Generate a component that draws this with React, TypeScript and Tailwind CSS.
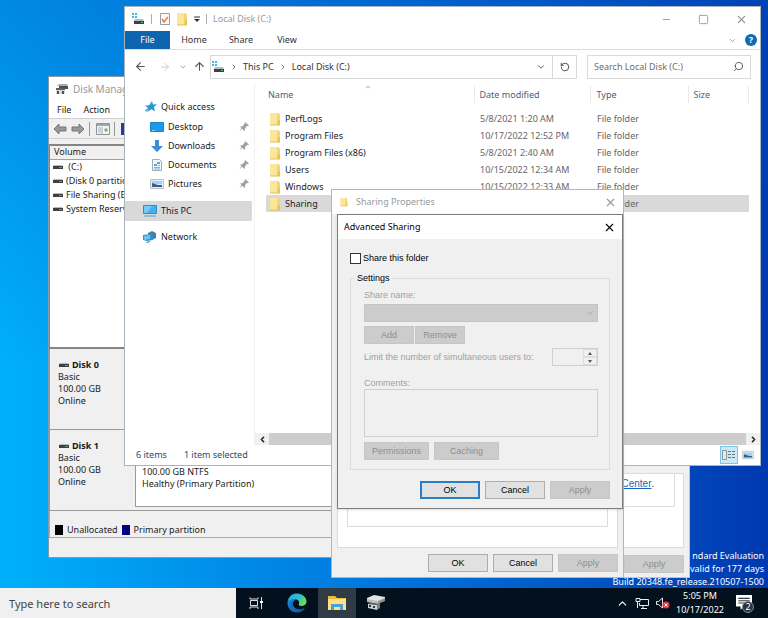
import type { ReactNode } from "react";
import clsx from "clsx";
import { ArrowLeft, ArrowRight, ArrowUp, ChevronDown, ChevronLeft, ChevronRight, ChevronUp, Minus, RotateCw, Search, Square, X } from "lucide-react";

const FILES = [
  { name: "PerfLogs", modified: "5/8/2021 1:20 AM" },
  { name: "Program Files", modified: "10/17/2022 12:52 PM" },
  { name: "Program Files (x86)", modified: "5/8/2021 2:40 AM" },
  { name: "Users", modified: "10/15/2022 12:34 AM" },
  { name: "Windows", modified: "10/15/2022 12:33 AM" },
  { name: "Sharing", modified: "", selected: true },
];

const VOLUMES = [" (C:)", "(Disk 0 partition 2)", "File Sharing (E:)", "System Reserved"];

const DISKS = [
  { name: "Disk 0", partition: null },
  { name: "Disk 1", partition: "100.00 GB NTFS" },
];

/* Icons */

function FolderIcon({ className = "w-3 h-3.5" }: { className?: string }) {
  return (
    <svg viewBox="0 0 12 14" className={clsx("shrink-0", className)}>
      <path d="M1 1h8l2 1.500V13H1z" fill="#f5d676" />
      <path d="M1 1h7v12H1z" fill="#fce69a" />
      <path d="M9 8h2v5H8z" fill="#eec452" />
      <path d="M1 13h10" stroke="#e5bf55" />
    </svg>
  );
}

function DriveIcon({ className = "w-3.5 h-3" }: { className?: string }) {
  return (
    <svg viewBox="0 0 14 12" className={clsx("shrink-0", className)}>
      <path d="M1 0h2v2H1zM4 0h2v2H4zM1 3h2v2H1zM4 3h2v2H4z" fill="#35bfe3" />
      <path d="M4 6h8l1 2H3z" fill="#b8bcbc" />
      <path d="M3 8h10v3H3z" fill="#3a4140" />
      <path d="M10 9h2v1h-2z" fill="#39c46a" />
    </svg>
  );
}

function VolumeIcon() {
  return (
    <svg viewBox="0 0 12 6" className="w-3 h-1.5 shrink-0">
      <path d="M2 1h8l1 1H1z" fill="#b5b9b8" />
      <path d="M1 2h10v3H1z" fill="#3b4140" />
      <path d="M7 3h3v1H7z" fill="#4aa877" />
    </svg>
  );
}

function DiskToolIcon() {
  return (
    <svg viewBox="0 0 14 12" className="w-3.5 h-3 shrink-0">
      <path d="M4 1h9l-1 2H2z" fill="#a9acac" />
      <path d="M4 3h9v3H4z" fill="#4a4e4e" />
      <path d="M1 5h9v6H1z" fill="#dadcdc" />
      <path d="M1 5h9v2H1z" fill="#5c6060" />
      <path d="M2 8h2v3H2zM7 8h2v3H7z" fill="#4d5050" />
    </svg>
  );
}

function StarIcon() {
  return (
    <svg viewBox="0 0 12 12" className="w-3 h-3 shrink-0">
      <path d="M7 0l1 3.500 4-.2-3 2.700 1 4.500-3.500-2.300L2 11l1.200-4L0 4.800l4.300-.5z" fill="#2b95d8" />
      <path d="M0 9l3-2 1 1-3 3z" fill="#63b5e6" />
    </svg>
  );
}

function DesktopIcon() {
  return (
    <svg viewBox="0 0 14 12" className="w-3.5 h-3 shrink-0">
      <path d="M.5 1.500h13v9H.5z" fill="#1a9bee" stroke="#1583cc" />
      <path d="M2 9h3v1H2z" fill="#8cd2ff" />
    </svg>
  );
}

function DownloadsIcon() {
  return (
    <svg viewBox="0 0 14 12" className="w-3.5 h-3 shrink-0">
      <path d="M5 0h4v6h4l-6 6-6-6h4z" fill="#3d8ad6" />
    </svg>
  );
}

function DocumentsIcon() {
  return (
    <svg viewBox="0 0 14 12" className="w-3.5 h-3 shrink-0">
      <path d="M2.500.5h7l2 2v9h-9z" fill="#f4f8fb" stroke="#9fadb8" />
      <path d="M7 3h3v2H7zM4 5h3v2H4z" fill="#58a5d8" />
      <path d="M4 8.500h6M4 10h6M8 6.500h2" stroke="#7fb3d4" />
    </svg>
  );
}

function PicturesIcon({ className = "w-3.5 h-3" }: { className?: string }) {
  return (
    <svg viewBox="0 0 14 12" className={clsx("shrink-0", className)}>
      <path d="M.5 1.500h13v9H.5z" fill="#dbeefc" stroke="#b8c2ca" />
      <path d="M2 3h10v3H2z" fill="#a3d1f3" />
      <path d="M2 9V5l3 1 3 1h4v2z" fill="#3c5d80" />
    </svg>
  );
}

function ThisPcIcon() {
  return (
    <svg viewBox="0 0 14 12" className="w-3.5 h-3 shrink-0">
      <path d="M.5.5h13v8H.5z" fill="#41b1f0" stroke="#2b8fce" />
      <path d="M1 1h8L4 8H1z" fill="#74caf8" />
      <path d="M1 11h12" stroke="#4f9fd0" />
    </svg>
  );
}

function NetworkIcon() {
  return (
    <svg viewBox="0 0 14 12" className="w-3.5 h-3 shrink-0">
      <path d="M5 2l4-2 4 2v5l-4 2-4-2z" fill="#4a7f9f" />
      <path d="M0 4l8-1 2 2v4l-6 1-4-1z" fill="#2d94cf" />
      <path d="M1 5l6-1v4L1 9z" fill="#6cc3ef" />
      <path d="M3 11l4-1v1l-3 1z" fill="#4f7e9c" />
    </svg>
  );
}

function PinIcon() {
  return (
    <svg viewBox="0 0 10 10" className="w-2.5 h-2.5 shrink-0">
      <path d="M6 0l4 3.500-1 .6-1.500.2L6 6.500 5.800 9 4.500 8 3 6.800.3 9.700 2.400 6 1 4.500l2.400-.3L5.500 2z" fill="#9aa0a5" />
    </svg>
  );
}

function EdgeIcon() {
  return (
    <svg viewBox="0 0 20 20" className="w-5 h-5">
      <defs>
        <linearGradient id="edge-top" x1="0" x2="1" y1="0" y2=".5">
          <stop offset="0" stopColor="#2aa7e6" />
          <stop offset=".6" stopColor="#2fc0cf" />
          <stop offset="1" stopColor="#6bdc58" />
        </linearGradient>
        <linearGradient id="edge-body" x1="0" x2="1" y1="0" y2="1">
          <stop offset="0" stopColor="#1b8ee0" />
          <stop offset="1" stopColor="#0d4f9f" />
        </linearGradient>
      </defs>
      <path d="M.5 9C1.500 3 5.500.5 10 .5c5.500 0 9.500 4 9.500 8 0 3-2.500 4.500-5 4.500-2 0-3.500-.7-2.500-2 .6-3-1-4.500-3.500-4.500C4 6.500 1 7.500.5 9z" fill="url(#edge-top)" />
      <path d="M.5 9C2 6.500 5 6 8.500 6.500 6 8 5.500 10 6 12c.8 3.500 5 5 9 4 1-.3 2-.8 2.500-.6.5.3-2.500 4.100-7.500 4.100C4 19.500 0 14.500.5 9z" fill="url(#edge-body)" />
      <path d="M8.500 6.500C5 9 5 14 9.500 18.500 5 18 3 15 3.200 11.500 3.400 9 5.500 7 8.500 6.500z" fill="#1569bd" />
    </svg>
  );
}

function ExplorerTaskIcon() {
  return (
    <svg viewBox="0 0 20 16" className="w-5 h-4">
      <path d="M1 1h7l2 2h9v12H1z" fill="#f1b93a" />
      <path d="M1 4h18v11H1z" fill="#fde08a" />
      <path d="M4 9h12v6H4z" fill="#4b9fd4" />
      <path d="M7 12h6v3H7z" fill="#fde08a" />
    </svg>
  );
}

function DiskTaskIcon() {
  return (
    <svg viewBox="0 0 20 18" className="w-5 h-4.5">
      <path d="M1 4l7-3 11 2v3l-7 3L1 6z" fill="#dfe3e3" />
      <path d="M1 5l11 2v3L1 8z" fill="#b9bebe" />
      <path d="M12 7l7-3v3l-7 3z" fill="#8e9494" />
      <path d="M2 9l9 1v6l-9-2z" fill="#cfd3d3" />
      <path d="M11 10l3-1v5l-3 2z" fill="#7b8181" />
      <path d="M3 11h2v2H3zM7 12h2v2H7z" fill="#303737" />
      <path d="M2 9l9 1v1L2 10z" fill="#3f4646" />
    </svg>
  );
}

/* Shared dialog parts */

function DialogButton({ children, disabled, primary, className = "w-[60px]" }: { children: ReactNode; disabled?: boolean; primary?: boolean; className?: string }) {
  return (
    <button
      disabled={disabled}
      className={clsx(
        "flex h-[18px] items-center justify-center border",
        className,
        disabled && "border-[#c6c6c6] bg-[#cccccc] text-[#8e8e8e]",
        !disabled && "bg-[#e1e1e1] text-black",
        !disabled && (primary ? "border-2 border-[#2a7fc4]" : "border-[#adadad]"),
      )}
    >
      {children}
    </button>
  );
}

function DialogActions({ primary }: { primary?: boolean }) {
  return (
    <div className="flex justify-end gap-[5px]">
      <DialogButton primary={primary}>OK</DialogButton>
      <DialogButton>Cancel</DialogButton>
      <DialogButton disabled>Apply</DialogButton>
    </div>
  );
}

/* Windows */

function DiskManagement() {
  return (
    <section className="absolute left-[48px] top-[76px] flex h-[482px] w-[642px] flex-col border border-[#8a9aa5] bg-[#f0f0f0] text-[9px] leading-3 text-[#1a1a1a]">
      <div className="flex h-6 items-center gap-1 bg-white px-1.5 text-[10px] text-[#999]">
        <DiskToolIcon />
        Disk Management
      </div>
      <nav className="flex h-[17px] items-center gap-3 bg-white px-2">
        <span>File</span>
        <span>Action</span>
      </nav>
      <div className="flex h-[21px] items-center gap-1 border-y border-[#d0d0d0] px-1">
        <svg viewBox="0 0 14 12" className="w-3.5 h-3">
          <path d="M6 1v3h7v4H6v3L1 6z" fill="#999" stroke="#777" />
        </svg>
        <svg viewBox="0 0 14 12" className="w-3.5 h-3">
          <path d="M8 1v3H1v4h7v3l5-5z" fill="#999" stroke="#777" />
        </svg>
        <span className="h-3.5 border-l border-[#999]" />
        <svg viewBox="0 0 14 12" className="ml-0.5 w-3.5 h-3">
          <path d="M.5.5h13v11H.5z" fill="#f4f4f4" stroke="#8a949b" />
          <path d="M1 1h12v2H1z" fill="#9ba6ad" />
          <path d="M2 5h3M2 7h3M2 9h3M6 4v7" stroke="#a7b0b5" />
          <path d="M10 5v4M8 7h4" stroke="#48a860" />
        </svg>
        <span className="h-3.5 border-l border-[#999]" />
        <span className="ml-0.5 h-3 w-3.5 bg-[#283a94]" />
      </div>
      <div className="mt-[5px] flex h-[205px] flex-col border-y-2 border-l border-[#858585] bg-white">
        <div className="h-3.5 border-b border-[#a0a0a0] bg-[#f0f0f0] px-1">Volume</div>
        <ul>
          {VOLUMES.map((volume) => (
            <li key={volume} className="flex h-3.5 items-center gap-0.5 whitespace-pre px-0.5">
              <VolumeIcon />
              {volume}
            </li>
          ))}
        </ul>
      </div>
      {DISKS.map((disk) => (
        <div key={disk.name} className="flex h-[81px] border-b border-l border-[#999]">
          <div className="w-[85px] px-2 pt-2.5">
            <h3 className="flex items-center gap-0.5 font-bold">
              <VolumeIcon />
              {disk.name}
            </h3>
            <p>Basic</p>
            <p>100.00 GB</p>
            <p>Online</p>
          </div>
          <div className="mb-[3px] flex flex-1 flex-col justify-end border-x border-b border-[#999] bg-white px-1.5 pb-4">
            {disk.partition && (
              <>
                <p>{disk.partition}</p>
                <p>Healthy (Primary Partition)</p>
              </>
            )}
          </div>
        </div>
      ))}
      <div className="flex h-[27px] items-center gap-1 border-b border-l border-[#aaa] px-[5px] pt-3">
        <span className="h-2.5 w-2 bg-black" />
        Unallocated
        <span className="h-2.5 w-2 bg-[#000080]" />
        Primary partition
      </div>
    </section>
  );
}

function SideLink({ icon, label }: { icon: ReactNode; label: string }) {
  return (
    <a href="#" className="flex h-[19px] items-center gap-1 pl-[25px] pr-[3px]">
      {icon}
      {label}
      <span className="ml-auto">
        <PinIcon />
      </span>
    </a>
  );
}

function Explorer() {
  return (
    <section className="absolute left-[124px] top-[6px] flex h-[460px] w-[637px] flex-col border border-[#a9b4bd] bg-white text-[9px] leading-3 text-[#1a1a1a]">
      {/* Title bar */}
      <div className="flex h-6 items-center gap-1.5 pl-1.5 text-[#999]">
        <DriveIcon />
        <span className="h-2.5 border-l border-[#aaa]" />
        <svg viewBox="0 0 10 12" className="ml-0.5 w-2.5 h-3">
          <path d="M.5.5h9v11h-9z" fill="#fafafa" stroke="#98a0a6" />
          <path d="M2 6l2 3 4-5" fill="none" stroke="#e8793a" strokeWidth="1.500" />
        </svg>
        <FolderIcon />
        <svg viewBox="0 0 6 6" className="w-1.5 h-1.5">
          <path d="M0 1h6" stroke="#333" />
          <path d="M0 3h6L3 6z" fill="#333" />
        </svg>
        <span className="h-2.5 border-l border-[#aaa]" />
        <h1>Local Disk (C:)</h1>
        <div className="ml-auto flex h-full items-center gap-[26px] pr-3">
          <button aria-label="Minimize"><Minus size={11} strokeWidth={2} /></button>
          <button aria-label="Maximize"><Square size={11} strokeWidth={2} /></button>
          <button aria-label="Close"><X size={13} strokeWidth={2} /></button>
        </div>
      </div>
      {/* Ribbon tabs */}
      <div className="flex h-[19px] items-stretch border-b border-[#dedede] text-[#333]">
        <button className="w-[45px] bg-[#0f64b0] text-white">File</button>
        <button className="w-12">Home</button>
        <button className="w-[46px]">Share</button>
        <button className="w-[46px]">View</button>
        <div className="ml-auto flex items-center gap-2 pr-[3px]">
          <ChevronDown size={9} className="text-[#888]" />
          <span className="flex h-3 w-3 items-center justify-center rounded-full bg-[#0b6bb5] font-bold text-white">?</span>
        </div>
      </div>
      {/* Address bar */}
      <div className="flex h-[33px] items-center px-[9px] text-[#333]">
        <ArrowLeft size={13} strokeWidth={2} className="text-[#555]" />
        <ArrowRight size={12} className="ml-3 text-[#ccc]" />
        <ChevronDown size={8} className="ml-2 text-[#777]" />
        <ArrowUp size={13} className="ml-1.5 text-[#555]" />
        <div className="ml-1 flex h-6 flex-1 items-center border border-[#d9d9d9]">
          <DriveIcon />
          <ChevronRight size={8} className="mx-[5px]" />
          <span>This PC</span>
          <ChevronRight size={8} className="mx-[5px]" />
          <span>Local Disk (C:)</span>
          <ChevronDown size={10} className="ml-auto mr-1.5" />
        </div>
        <button aria-label="Refresh" className="-ml-px flex h-6 w-[25px] items-center justify-center border border-[#d9d9d9]">
          <RotateCw size={10} className="-scale-x-100" />
        </button>
        <label className="ml-2.5 flex h-6 w-[164px] items-center border border-[#d9d9d9] px-1.5">
          <input aria-label="Search" placeholder="Search Local Disk (C:)" className="min-w-0 flex-1 outline-none placeholder:text-[#6d6d6d]" />
          <Search size={11} className="-scale-x-100 text-[#555]" />
        </label>
      </div>
      <div className="flex min-h-0 flex-1">
        {/* Navigation pane */}
        <nav className="w-[127px] pt-3.5">
          <a href="#" className="flex h-5 items-center gap-1 pl-5">
            <StarIcon />
            Quick access
          </a>
          <SideLink icon={<DesktopIcon />} label="Desktop" />
          <SideLink icon={<DownloadsIcon />} label="Downloads" />
          <SideLink icon={<DocumentsIcon />} label="Documents" />
          <SideLink icon={<PicturesIcon />} label="Pictures" />
          <a href="#" className="mt-2 flex h-5 items-center gap-1 bg-[#d9d9d9] pl-[18px]">
            <ThisPcIcon />
            This PC
          </a>
          <a href="#" className="mt-1.5 flex h-5 items-center gap-1 pl-[18px]">
            <NetworkIcon />
            Network
          </a>
        </nav>
        {/* File list */}
        <div className="ml-0.5 flex flex-1 flex-col border-l border-[#f2f2f2]">
          <div className="flex-1 pl-[11px]">
            <ChevronUp size={8} className="ml-[98px] text-[#777]" />
            <table className="-mt-[5px] w-[483px] table-fixed text-left">
              <thead>
                <tr className="h-[17px] text-[#4c607a]">
                  <th className="w-[208px] pl-0.5 font-normal">Name</th>
                  <th className="w-[116px] border-l border-[#e9e9e9] pl-[5px] font-normal">Date modified</th>
                  <th className="w-[98px] border-l border-[#e9e9e9] pl-1.5 font-normal">Type</th>
                  <th className="border-x border-[#e9e9e9] pl-[5px] font-normal">Size</th>
                </tr>
                <tr className="h-[7px]" />
              </thead>
              <tbody>
                {FILES.map((file) => (
                  <tr key={file.name} className={clsx("h-[17px]", file.selected && "bg-[#d9d9d9]")}>
                    <td className="pl-[3px]">
                      <span className="flex items-center gap-1">
                        <FolderIcon />
                        {file.name}
                      </span>
                    </td>
                    <td className="pl-1.5 text-[#666]">{file.modified}</td>
                    <td className="pl-[7px] text-[#666]">File folder</td>
                    <td />
                  </tr>
                ))}
              </tbody>
            </table>
          </div>
          <div className="flex h-3 items-center bg-[#f0f0f0]">
            <span className="flex w-3.5 justify-center"><ChevronLeft size={9} strokeWidth={4} /></span>
            <span className="h-full flex-1 bg-[#cdcdcd]" />
            <span className="flex w-3.5 justify-center"><ChevronRight size={9} strokeWidth={4} /></span>
          </div>
        </div>
      </div>
      {/* Status bar */}
      <div className="flex h-5 items-center gap-[17px] pl-[11px] text-[#2b4a73]">
        <span>6 items</span>
        <span>1 item selected</span>
        <div className="ml-auto flex h-full items-center gap-1 pr-1.5">
          <span className="flex h-[18px] w-[18px] items-center justify-center border border-[#7cc4e8] bg-[#cce8f6]">
            <svg viewBox="0 0 14 10" className="w-3.5 h-2.5">
              <path d="M.5.5h4v9h-4z" fill="#e7ebe7" stroke="#8a959b" />
              <path d="M6 1.500h3M10 1.500h3M6 4.500h3M10 4.500h3M6 7.500h3M10 7.500h3" stroke="#5f7580" />
            </svg>
          </span>
          <PicturesIcon className="w-3 h-2.5" />
        </div>
      </div>
    </section>
  );
}

function VolumeProperties() {
  return (
    <section className="absolute left-[397px] top-[189px] flex h-[389px] w-[293px] flex-col border border-[#c4c4c4] bg-[#f0f0f0] px-[5px] pb-1 font-['Liberation_Sans',sans-serif] text-[9px] leading-3">
      <div className="mt-auto h-[75px] border border-[#dcdcdc] bg-white px-2">
        <div className="h-[33px] border-x border-b border-[#dcdcdc] pr-5 pt-1 text-right">
          <a href="#" className="text-[10px] text-[#1a66b8] underline">Center</a>.
        </div>
      </div>
      <div className="mt-[7px] flex justify-end">
        <DialogButton disabled>Apply</DialogButton>
      </div>
    </section>
  );
}

function SharingProperties() {
  return (
    <section className="absolute left-[331px] top-[189px] flex h-[389px] w-[293px] flex-col border border-[#b5b5b5] bg-[#f0f0f0] text-[9px] leading-3">
      <div className="flex h-6 items-center gap-2 bg-white pl-2 pr-1.5 text-[#999]">
        <FolderIcon className="w-2 h-2.5" />
        <h2>Sharing Properties</h2>
        <button aria-label="Close properties" className="ml-auto"><X size={13} /></button>
      </div>
      <div className="mx-[5px] flex flex-1 flex-col border border-[#dcdcdc] bg-white px-[9px] pb-5">
        <div className="flex-1 border border-t-0 border-[#dcdcdc]" />
      </div>
      <div className="px-[5px] pb-[5px] pt-1.5 font-['Liberation_Sans',sans-serif]">
        <DialogActions />
      </div>
    </section>
  );
}

function AdvancedSharing() {
  return (
    <section className="absolute left-[337px] top-[214px] flex h-[295px] w-[286px] flex-col border border-[#7d7d7d] bg-[#f0f0f0] font-['Liberation_Sans',sans-serif] text-[9px] leading-3 text-black shadow-sm">
      <div className="flex h-6 items-center justify-between bg-white px-1.5">
        <h2 className="font-['Noto_Sans',sans-serif]">Advanced Sharing</h2>
        <button aria-label="Close"><X size={13} strokeWidth={2} /></button>
      </div>
      <div className="px-3 pt-[13px]">
        <label className="flex items-center gap-0.5">
          <input type="checkbox" className="h-[11px] w-[11px] appearance-none border border-[#333] bg-white" />
          Share this folder
        </label>
        <fieldset className="mt-2 h-[198px] border border-[#dcdcdc] pl-[13px] pr-[11px] text-[#a0a0a0]">
          <legend className="-ml-[9px] px-0.5 text-black">Settings</legend>
          <label htmlFor="share-name" className="mt-[5px] block">Share name:</label>
          <div className="relative mt-[3px]">
            <select id="share-name" disabled className="block h-[18px] w-full appearance-none border border-[#c4c4c4] bg-[#cccccc]" />
            <ChevronDown size={10} className="absolute right-[3px] top-1" />
          </div>
          <div className="mt-1 flex gap-px">
            <DialogButton disabled className="w-[50px]">Add</DialogButton>
            <DialogButton disabled className="w-[50px]">Remove</DialogButton>
          </div>
          <div className="mt-1 flex h-[18px] items-center justify-between">
            <label htmlFor="user-limit">Limit the number of simultaneous users to:</label>
            <div className="flex h-[18px] w-[46px] border border-[#cfcfcf]">
              <input id="user-limit" disabled className="min-w-0 flex-1" />
              <div className="flex w-3.5 flex-col text-[#555]">
                <button disabled aria-label="Increase" className="flex flex-1 items-center justify-center border border-[#ddd]">
                  <svg viewBox="0 0 4 3" className="w-1 h-[3px]"><path d="M2 0l2 3H0z" fill="currentColor" /></svg>
                </button>
                <button disabled aria-label="Decrease" className="flex flex-1 items-center justify-center border border-[#ddd]">
                  <svg viewBox="0 0 4 3" className="w-1 h-[3px]"><path d="M0 0h4L2 3z" fill="currentColor" /></svg>
                </button>
              </div>
            </div>
          </div>
          <label htmlFor="comments" className="mt-[11px] block">Comments:</label>
          <textarea id="comments" disabled className="block h-12 w-full resize-none border border-[#cfcfcf]" />
          <div className="mt-[5px] flex gap-[5px]">
            <DialogButton disabled className="w-[65px]">Permissions</DialogButton>
            <DialogButton disabled className="w-[65px]">Caching</DialogButton>
          </div>
        </fieldset>
        <div className="pt-[11px]">
          <DialogActions primary />
        </div>
      </div>
    </section>
  );
}

function Taskbar() {
  return (
    <footer className="absolute inset-x-0 bottom-0 flex h-[30px] bg-[#03101d] text-[9px] leading-3 text-white">
      <input aria-label="Search Windows" placeholder="Type here to search" className="w-[236px] bg-[#f0f0f0] px-[9px] pt-0.5 text-[11px] placeholder:text-[#444]" />
      <button aria-label="Task View" className="flex w-10 items-center justify-center">
        <svg viewBox="0 0 14 14" className="w-3.5 h-3.5" fill="none" stroke="#ddd">
          <path d="M1 1.500V3h8V1.500M1 13v-2h8v2M1.500 4.500h7v5h-7zM12.500 1v12" />
          <path d="M11 5h3v2h-3z" fill="#fff" stroke="none" />
        </svg>
      </button>
      <button aria-label="Edge" className="flex w-[42px] items-center justify-center"><EdgeIcon /></button>
      <button aria-label="File Explorer" className="flex w-[38px] items-center justify-center bg-[#2f3c45]"><ExplorerTaskIcon /></button>
      <button aria-label="Disk Management" className="flex w-10 items-center justify-center"><DiskTaskIcon /></button>
      <div className="ml-auto flex items-center gap-1.5 pr-1">
        <ChevronUp size={13} />
        <svg viewBox="0 0 15 12" className="w-[15px] h-3" fill="none" stroke="#eee">
          <path d="M5 2.500h8.500v6H4.500V6M8 9v2M6 11.500h6" />
          <path d="M1 1.500h4v3H1zM2.500 5v6" />
        </svg>
        <svg viewBox="0 0 14 12" className="w-3.5 h-3">
          <path d="M.5 4.500h2L6.500 1v10l-4-3.500h-2z" fill="none" stroke="#eee" />
          <circle cx="10" cy="8" r="3.500" fill="#df3640" />
          <path d="M8.500 6.500l3 3M11.500 6.500l-3 3" stroke="#fff" />
        </svg>
        <div className="w-12 text-center leading-[14px]">
          <p>5:05 PM</p>
          <p>10/17/2022</p>
        </div>
        <div className="relative ml-1.5 mr-3">
          <svg viewBox="0 0 14 14" className="w-4 h-4">
            <path d="M0 0h14v10H7l-3 3v-3H0z" fill="#fff" />
            <path d="M2 3h10M2 5h10M2 7h8" stroke="#333b44" />
          </svg>
          <span className="absolute left-1.5 top-1.5 flex h-3 w-3 items-center justify-center rounded-full border border-[#888] bg-[#2b343d]">2</span>
        </div>
      </div>
    </footer>
  );
}

export default function App() {
  return (
    <main className="relative h-screen w-full overflow-hidden bg-linear-to-r from-[#00b0fc] via-[#0075dc] to-[#0038b0] font-['Noto_Sans',sans-serif]">
      <div className="absolute inset-0 bg-linear-to-b from-[#0050c0]/40 to-transparent to-60%" />
      <DiskManagement />
      <VolumeProperties />
      <Explorer />
      <SharingProperties />
      <div className="absolute bottom-[30px] right-1 flex flex-col items-end text-[9px] leading-[13px] text-white">
        <p className="max-w-[75px] overflow-hidden whitespace-nowrap">ndard Evaluation</p>
        <p>valid for 177 days</p>
        <p>Build 20348.fe_release.210507-1500</p>
      </div>
      <AdvancedSharing />
      <Taskbar />
    </main>
  );
}
